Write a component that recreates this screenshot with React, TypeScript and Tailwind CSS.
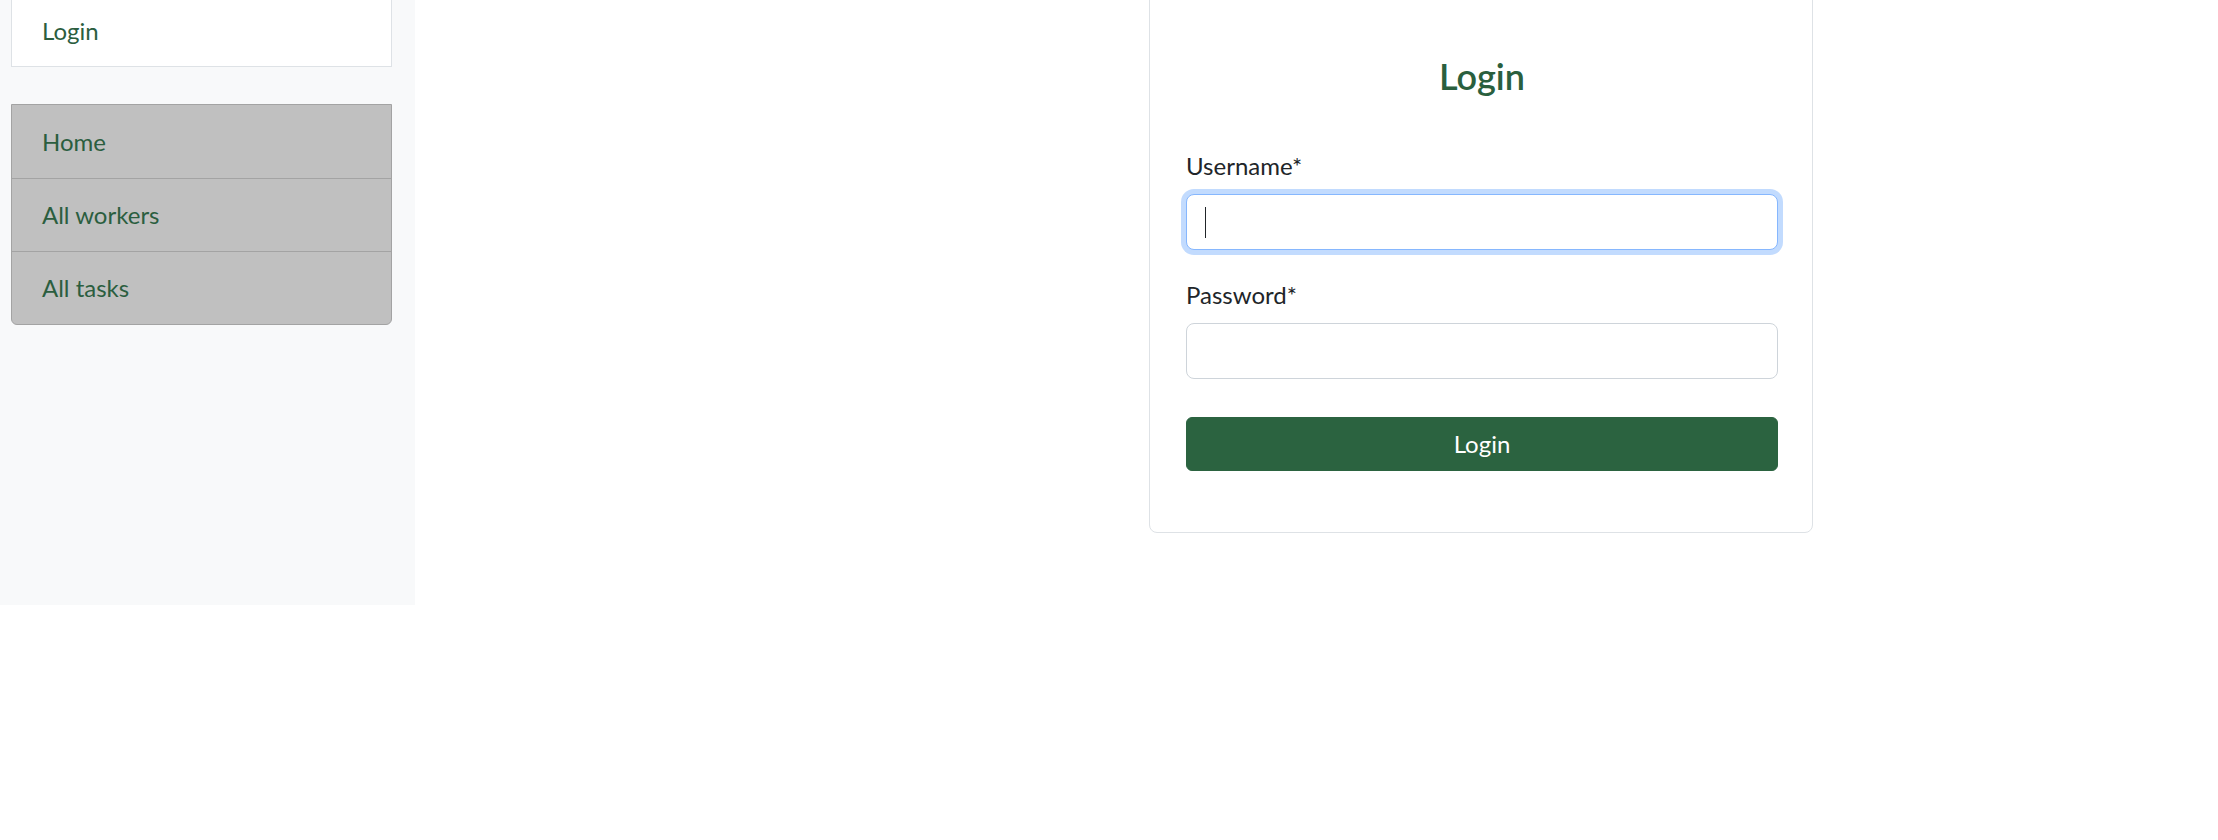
import React from 'react';

const font = { fontFamily: 'Lato, "Open Sans", sans-serif' };

const Sidebar: React.FC = () => {
  const links = ['Home', 'All workers', 'All tasks'];

  return (
    <aside className="w-[415px] h-[605px] shrink-0 bg-[#f8f9fa] pl-[11px] pr-[23px] overflow-hidden">
      <div className="-mt-[6px] h-[73px] bg-white border border-[#dee2e6] px-[30px] pt-[1px] flex items-center text-[24px] leading-[36px] text-[#2b5e3f]">
        Login
      </div>

      <div className="mt-[37px] bg-[#c0c0c0] border border-[#a3a3a3] rounded-b-[6px]">
        {links.map((link, index) => (
          <div
            key={link}
            className={`h-[73px] px-[30px] flex items-center text-[24px] leading-[36px] text-[#2b5e3f] ${
              index > 0 ? 'border-t border-[#a3a3a3]' : ''
            }`}
          >
            {link}
          </div>
        ))}
      </div>
    </aside>
  );
};

const LoginCard: React.FC = () => {
  return (
    <div className="ml-[734px] -mt-[10px] w-[664px] h-[543px] bg-white border border-[#dee2e6] rounded-[8px] pl-[36px] pr-[34px] pt-[64px]">
      <h2 className="text-center text-[36px] leading-[43px] font-semibold text-[#2a5f3e]">Login</h2>

      <div className="mt-[50px]">
        <label className="block text-[24px] leading-[36px] text-[#212529]">Username*</label>
        <div className="mt-[10px] h-[56px] bg-white border border-[#86b7fe] rounded-[8px] shadow-[0_0_0_5px_rgba(13,110,253,0.25)] pl-[18px] flex items-center">
          <span className="w-px h-[31px] bg-[#212529]" />
        </div>
      </div>

      <div className="mt-[27px]">
        <label className="block text-[24px] leading-[36px] text-[#212529]">Password*</label>
        <div className="mt-[10px] h-[56px] bg-white border border-[#ced4da] rounded-[8px]" />
      </div>

      <button className="mt-[38px] w-full h-[54px] bg-[#2b6340] border border-[#2b6340] rounded-[6px] text-white text-[24px] leading-[36px]">
        Login
      </button>
    </div>
  );
};

const App: React.FC = () => {
  return (
    <div className="w-[2218px] h-[840px] bg-white flex items-start overflow-hidden" style={font}>
      <Sidebar />
      <LoginCard />
    </div>
  );
};

export default App;
